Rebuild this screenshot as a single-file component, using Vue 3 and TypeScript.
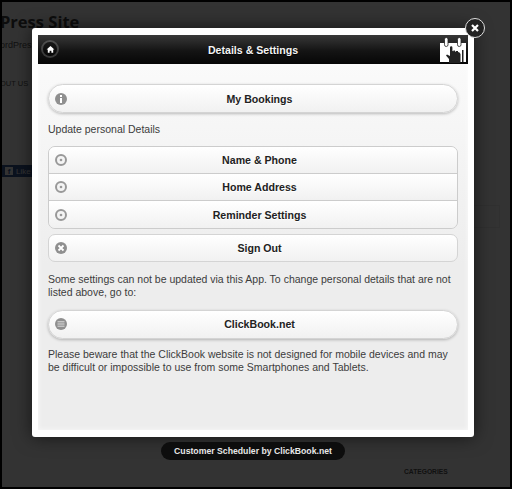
<template>
  <div class="page">
    <div class="behind">
      <h1 class="site-title">Press Site</h1>
      <p class="site-sub">ordPress</p>
      <p class="site-link">OUT US</p>
      <span class="like"><i class="like-f">f</i>Like</span>
      <span class="search-box"></span>
      <span class="categories">CATEGORIES</span>
    </div>

    <div class="overlay"></div>

    <section class="modal">
      <header class="bar">
        <span class="home">
          <svg viewBox="0 0 12 12" width="9" height="9">
            <path d="M6 1.200 11.200 6H9.600v4.400H7.200V7.600H4.800v2.800H2.400V6H.8z" fill="#fff" />
          </svg>
        </span>
        <h2>Details &amp; Settings</h2>
        <svg class="logo" viewBox="0 0 28 27" width="28" height="27">
          <path d="M1 7h26v19H1z" fill="#fff" />
          <rect x="5.500" y="1.500" width="3.500" height="9" rx="1.700" fill="#fff" stroke="#222" stroke-width=".8" />
          <rect x="18.500" y="1.500" width="3.500" height="9" rx="1.700" fill="#fff" stroke="#222" stroke-width=".8" />
          <path d="M23 14h1.500v12H23z" fill="#222" />
          <path d="M10 27v-4l-3-3.500 1-1 3 1.500V11.500a1.200 1.200 0 0 1 2.400 0V15l1 .3v-.8h1.600v1l1 .2v-.6H19v1l1.500.3 1 1.500V27z" fill="#222" />
        </svg>
      </header>

      <div class="content">
        <button type="button" class="btn pill">
          <span class="ico">
            <svg viewBox="0 0 12 12" width="12" height="12"><circle cx="6" cy="6" r="6" fill="#8f8f8f" /><rect x="5" y="2" width="2" height="2" fill="#fff" /><rect x="5" y="5" width="2" height="5" fill="#fff" /></svg>
          </span>
          My Bookings
        </button>
        <p class="label">Update personal Details</p>

        <div class="group">
          <button v-for="item in personal" :key="item" type="button" class="btn row">
            <span class="ico">
              <svg viewBox="0 0 12 12" width="12" height="12"><circle cx="6" cy="6" r="5" fill="#f4f4f4" stroke="#999" stroke-width="2" /><circle cx="6" cy="6" r="1.300" fill="#999" /></svg>
            </span>
            {{ item }}
          </button>
        </div>

        <button type="button" class="btn square">
          <span class="ico">
            <svg viewBox="0 0 12 12" width="12" height="12"><circle cx="6" cy="6" r="6" fill="#8f8f8f" /><path d="m3.500 3.500 5 5m0-5-5 5" stroke="#fff" stroke-width="1.800" /></svg>
          </span>
          Sign Out
        </button>

        <p class="note first">Some settings can not be updated via this App. To change personal details that are not listed above, go to:</p>

        <button type="button" class="btn pill">
          <span class="ico">
            <svg viewBox="0 0 12 12" width="12" height="12"><circle cx="6" cy="6" r="6" fill="#8f8f8f" /><path d="M2.500 3.800h7M2.500 6h7M2.500 8.200h7" stroke="#ddd" stroke-width="1" /></svg>
          </span>
          ClickBook.net
        </button>

        <p class="note last">Please beware that the ClickBook website is not designed for mobile devices and may be difficult or impossible to use from some Smartphones and Tablets.</p>
      </div>

      <span class="close">
        <svg viewBox="0 0 10 10" width="10" height="10"><path d="m2 2 6 6m0-6-6 6" stroke="#fff" stroke-width="2.200" /></svg>
      </span>
    </section>

    <div class="tag">Customer Scheduler by ClickBook.net</div>
  </div>
</template>

<script setup lang="ts">
const personal: string[] = ['Name & Phone', 'Home Address', 'Reminder Settings'];
</script>

<style>
html,
body {
  margin: 0;
  background: #000;
}
</style>

<style scoped>
.page {
  position: relative;
  width: 512px;
  height: 489px;
  overflow: hidden;
  background: #fff;
  font-family: "Liberation Sans", Arial, sans-serif;
}

.behind {
  height: 100%;
  position: relative;
  color: #555;
}

.site-title {
  margin: 0;
  padding-top: 10px;
  font-family: "Open Sans", sans-serif;
  font-size: 16.500px;
  line-height: 24px;
  font-weight: 700;
  color: #444;
}

.site-sub {
  margin: 4px 0 0;
  font-size: 9px;
  line-height: 14px;
}

.site-link {
  margin: 26px 0 0;
  font-size: 7.500px;
  line-height: 12px;
}

.like {
  position: absolute;
  left: 2px;
  top: 165px;
  width: 30px;
  height: 12px;
  display: flex;
  align-items: center;
  gap: 3px;
  background: #3b5998;
  color: #fff;
  font-size: 8px;
}

.like-f {
  width: 8px;
  height: 8px;
  margin-left: 3px;
  background: #fff;
  color: #3b5998;
  font-style: normal;
  font-weight: 700;
  line-height: 9px;
  text-align: center;
}

.search-box {
  position: absolute;
  left: 470px;
  top: 205px;
  width: 30px;
  height: 23px;
  border: 1px solid #eee;
  box-sizing: border-box;
}

.categories {
  position: absolute;
  left: 404px;
  top: 467px;
  font-size: 6.700px;
  line-height: 10px;
  font-weight: 700;
  color: #555;
}

.overlay {
  position: absolute;
  inset: 2px;
  background: rgba(0, 0, 0, 0.8);
  box-shadow: 0 0 0 2px #000;
}

.modal {
  position: absolute;
  left: 32px;
  top: 28px;
  width: 442px;
  height: 409px;
  box-sizing: border-box;
  padding: 7px 6px;
  display: flex;
  flex-direction: column;
  background: #fff;
  border-radius: 3px;
  box-shadow: 0 0 18px rgba(0, 0, 0, 0.6);
}

.bar {
  flex: none;
  height: 29px;
  position: relative;
  display: flex;
  align-items: center;
  justify-content: center;
  background: linear-gradient(#383838, #141414 55%, #060606);
}

.bar h2 {
  margin: 0;
  color: #f4f4f4;
  font-size: 10.600px;
  font-weight: 700;
  text-shadow: 0 1px 1px #000;
}

.home {
  position: absolute;
  left: 5px;
  top: 7px;
  width: 14px;
  height: 14px;
  display: flex;
  align-items: center;
  justify-content: center;
  background: rgba(0, 0, 0, 0.4);
  border-radius: 50%;
  box-shadow: 0 0 0 2px rgba(255, 255, 255, 0.18);
}

.logo {
  position: absolute;
  right: 1px;
  top: 1px;
}

.content {
  flex: 1;
  padding: 20px 10px 0;
  background: linear-gradient(#fafafa, #ededed 55%);
  box-shadow: inset 0 0 5px rgba(255, 255, 255, 0.7);
}

.btn {
  position: relative;
  display: block;
  width: 100%;
  padding: 0 0 0 13px;
  border: 1px solid #d4d4d4;
  background: linear-gradient(#fff, #f1f1f1);
  color: #222;
  font-family: inherit;
  font-size: 10.600px;
  font-weight: 700;
  text-align: center;
  text-shadow: 0 1px 0 #fff;
}

.ico {
  position: absolute;
  left: 6px;
  top: 50%;
  width: 12px;
  height: 12px;
  margin-top: -6px;
  display: flex;
}

.pill {
  height: 29px;
  border-radius: 15px;
  box-shadow: 0 1px 3px rgba(0, 0, 0, 0.25);
}

.label {
  margin: 9px 0 10px;
  font-size: 10.500px;
  line-height: 14px;
  color: #3c3c3c;
}

.group {
  border: 1px solid #ccc;
  border-radius: 7px;
  overflow: hidden;
  margin-bottom: 5px;
}

.row {
  height: 27px;
  border: 0;
  border-bottom: 1px solid #ccc;
}

.row:last-child {
  border-bottom: 0;
}

.square {
  height: 28px;
  border-radius: 7px;
}

.note {
  margin: 0;
  font-size: 10.500px;
  line-height: 13px;
  color: #3c3c3c;
}

.note.first {
  margin: 10.500px 0 11px;
}

.note.last {
  margin-top: 9.500px;
}

.close {
  position: absolute;
  right: -11px;
  top: -10px;
  width: 18px;
  height: 18px;
  display: flex;
  align-items: center;
  justify-content: center;
  background: #222;
  border: 1px solid #ddd;
  border-radius: 50%;
}

.tag {
  position: absolute;
  left: 161px;
  top: 442px;
  width: 184px;
  height: 18px;
  display: flex;
  align-items: center;
  justify-content: center;
  background: #0d0d0d;
  border-radius: 9px;
  color: #e8e8e8;
  font-size: 8.700px;
  font-weight: 700;
}
</style>
